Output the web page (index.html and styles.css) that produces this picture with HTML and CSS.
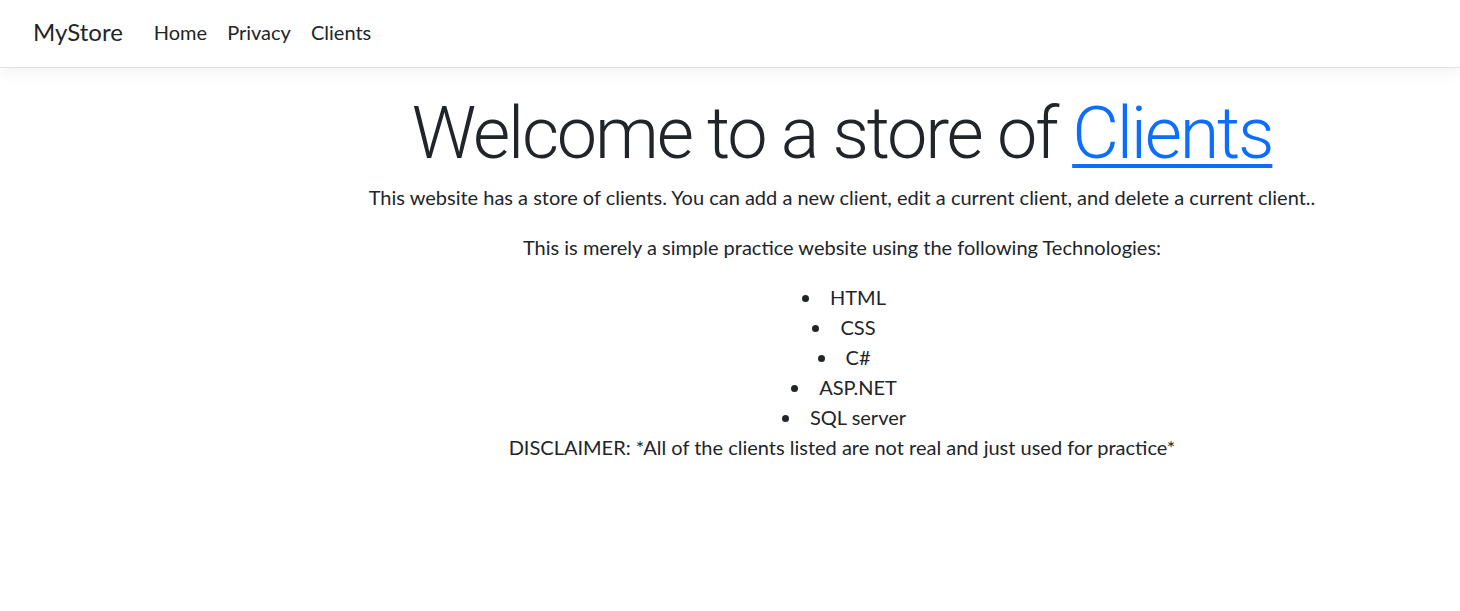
FILE: index.html
```html
<!DOCTYPE html>
<html lang="en">
<head>
<meta charset="utf-8">
<title>MyStore</title>
<link rel="stylesheet" href="styles.css">
</head>
<body>
<header class="navbar">
  <a class="brand" href="#">MyStore</a>
  <nav class="nav-links">
    <a href="#">Home</a>
    <a href="#">Privacy</a>
    <a href="#">Clients</a>
  </nav>
</header>
<main class="main">
  <div class="intro">
    <h1 class="title">Welcome to a store of <a href="#">Clients</a></h1>
    <p>This website has a store of clients. You can add a new client, edit a current client, and delete a current client..</p>
    <p>This is merely a simple practice website using the following Technologies:</p>
    <ul class="tech">
      <li>HTML</li>
      <li>CSS</li>
      <li>C#</li>
      <li>ASP.NET</li>
      <li>SQL server</li>
    </ul>
    <div>DISCLAIMER: *All of the clients listed are not real and just used for practice*</div>
  </div>
</main>
</body>
</html>
```
FILE: styles.css
```css
html, body { margin: 0; padding: 0; }
body {
  font-family: "Lato", "Open Sans", sans-serif;
  color: #212529;
  background: #fff;
  font-size: 20px;
  line-height: 30px;
}
a { color: inherit; text-decoration: none; }
.navbar {
  height: 63px;
  padding-bottom: 4px;
  border-bottom: 1px solid #dee2e6;
  box-shadow: 0 5px 15px rgba(0,0,0,.05);
  display: flex;
  align-items: center;
  padding-left: 33px;
}
.brand { font-size: 24px; margin-right: 31px; }
.nav-links { display: flex; gap: 20px; }
.main { padding-left: 224px; padding-top: 21px; }
.intro { text-align: center; }
.title {
  font-family: "Roboto", "Lato", sans-serif;
  font-size: 72px;
  font-weight: 300;
  letter-spacing: -2.2px;
  line-height: 90px;
  margin: 0 0 3px;
}
.title a { color: #0d6efd; text-decoration: underline; text-decoration-thickness: 4px; text-underline-offset: 6px; }
p { margin: 0 0 20px; }
.tech { margin: 0; padding-left: 4px; list-style-position: inside; }
```
